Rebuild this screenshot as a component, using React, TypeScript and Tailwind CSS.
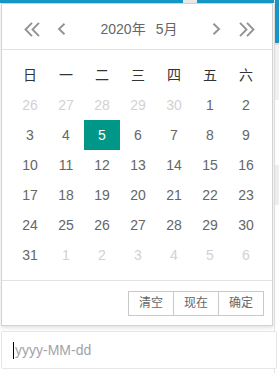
const weekdays = ["日", "一", "二", "三", "四", "五", "六"];

type Day = { n: number; muted: boolean; active?: boolean };

const buildDays = (): Day[] => {
  const days: Day[] = [];
  for (let i = 26; i <= 30; i++) days.push({ n: i, muted: true });
  for (let i = 1; i <= 31; i++) days.push({ n: i, muted: false, active: i === 5 });
  for (let i = 1; i <= 6; i++) days.push({ n: i, muted: true });
  return days;
};

const Chevron = ({ dir }: { dir: "left" | "right" }) => (
  <svg width="9" height="12" viewBox="0 0 9 12" fill="none">
    <path
      d={dir === "left" ? "M7.5 0.8 L2 6 L7.5 11.2" : "M1.5 0.8 L7 6 L1.5 11.2"}
      stroke="#939393"
      strokeWidth="1.9"
    />
  </svg>
);

const DoubleChevron = ({ dir }: { dir: "left" | "right" }) => (
  <svg width="16" height="15" viewBox="0 0 16 15" fill="none">
    {dir === "left" ? (
      <>
        <path d="M8 0.8 L1.5 7.5 L8 14.2" stroke="#939393" strokeWidth="1.9" />
        <path d="M15 0.8 L8.5 7.5 L15 14.2" stroke="#939393" strokeWidth="1.9" />
      </>
    ) : (
      <>
        <path d="M1 0.8 L7.5 7.5 L1 14.2" stroke="#939393" strokeWidth="1.9" />
        <path d="M8 0.8 L14.5 7.5 L8 14.2" stroke="#939393" strokeWidth="1.9" />
      </>
    )}
  </svg>
);

export default function App() {
  const days = buildDays();

  return (
    <div
      className="relative h-[373px] w-[279px] overflow-hidden bg-white"
      style={{ fontFamily: '"Liberation Sans", "Noto Sans CJK SC", sans-serif' }}
    >
      {/* page behind the picker */}
      <div className="flex h-full">
        <div className="flex-1">
          <div className="flex h-[3px]">
            <div className="w-[183px] bg-[#1596c6]" />
            <div className="w-[14px] bg-[#e9e9e9]" />
            <div className="flex-1 bg-[#1596c6]" />
          </div>
        </div>
        <div className="flex w-[5px] flex-col border-l border-[#e4e4e4]">
          <div className="h-[43px] bg-[#1596c6]" />
          <div className="h-[2px] bg-[#f3d6cf]" />
          <div className="h-[55px] bg-[#f1f1f1]" />
          <div className="h-[65px] bg-white" />
          <div className="h-[40px] bg-[#eeeeee]" />
          <div className="flex-1 bg-white" />
        </div>
      </div>

      {/* picker + input */}
      <div className="absolute inset-0 flex flex-col pl-[1px] pt-[3px]">
        <div className="w-[272px] border border-[#d2d2d2] bg-white shadow-[0_2px_4px_rgba(0,0,0,0.12)]">
          <div className="flex h-[46px] items-start border-b border-[#e2e2e2] pt-[10px]">
            <div className="flex h-[30px] w-full items-center">
              <div className="ml-[22px]">
                <DoubleChevron dir="left" />
              </div>
              <div className="ml-[17px]">
                <Chevron dir="left" />
              </div>
              <div className="flex flex-1 justify-center text-[14px] text-[#666]">
                <span className="px-[5px]">2020年</span>
                <span className="px-[5px]">5月</span>
              </div>
              <div>
                <Chevron dir="right" />
              </div>
              <div className="ml-[18px] mr-[17px]">
                <DoubleChevron dir="right" />
              </div>
            </div>
          </div>

          <div className="p-[10px]">
            <div className="grid grid-cols-[repeat(7,36px)]">
              {weekdays.map((w) => (
                <div key={w} className="flex h-[30px] items-center justify-center text-[14px] text-[#333]">
                  {w}
                </div>
              ))}
              {days.map((d, i) => (
                <div
                  key={i}
                  className={
                    d.active
                      ? "flex h-[30px] items-center justify-center bg-[#009688] text-[14px] text-white"
                      : d.muted
                        ? "flex h-[30px] items-center justify-center text-[14px] text-[#d2d2d2]"
                        : "flex h-[30px] items-center justify-center text-[14px] text-[#666]"
                  }
                >
                  {d.n}
                </div>
              ))}
            </div>
          </div>

          <div className="flex h-[45px] items-center justify-end border-t border-[#e2e2e2] pr-[8px]">
            <span className="flex h-[25px] items-center border border-[#c9c9c9] px-[10px] text-[12px] text-[#666]">清空</span>
            <span className="-ml-px flex h-[25px] items-center border border-[#c9c9c9] px-[10px] text-[12px] text-[#666]">现在</span>
            <span className="-ml-px flex h-[25px] items-center border border-[#c9c9c9] px-[10px] text-[12px] text-[#666]">确定</span>
          </div>
        </div>

        <div className="mt-[5px] flex h-[38px] w-[276px] items-center rounded-[2px] border border-[#e6e6e6] bg-white pl-[11px] text-[14px] text-[#a3a3a8]">
          <span className="mr-[1px] h-[17px] w-px bg-black" />
          yyyy-MM-dd
        </div>
      </div>
    </div>
  );
}
